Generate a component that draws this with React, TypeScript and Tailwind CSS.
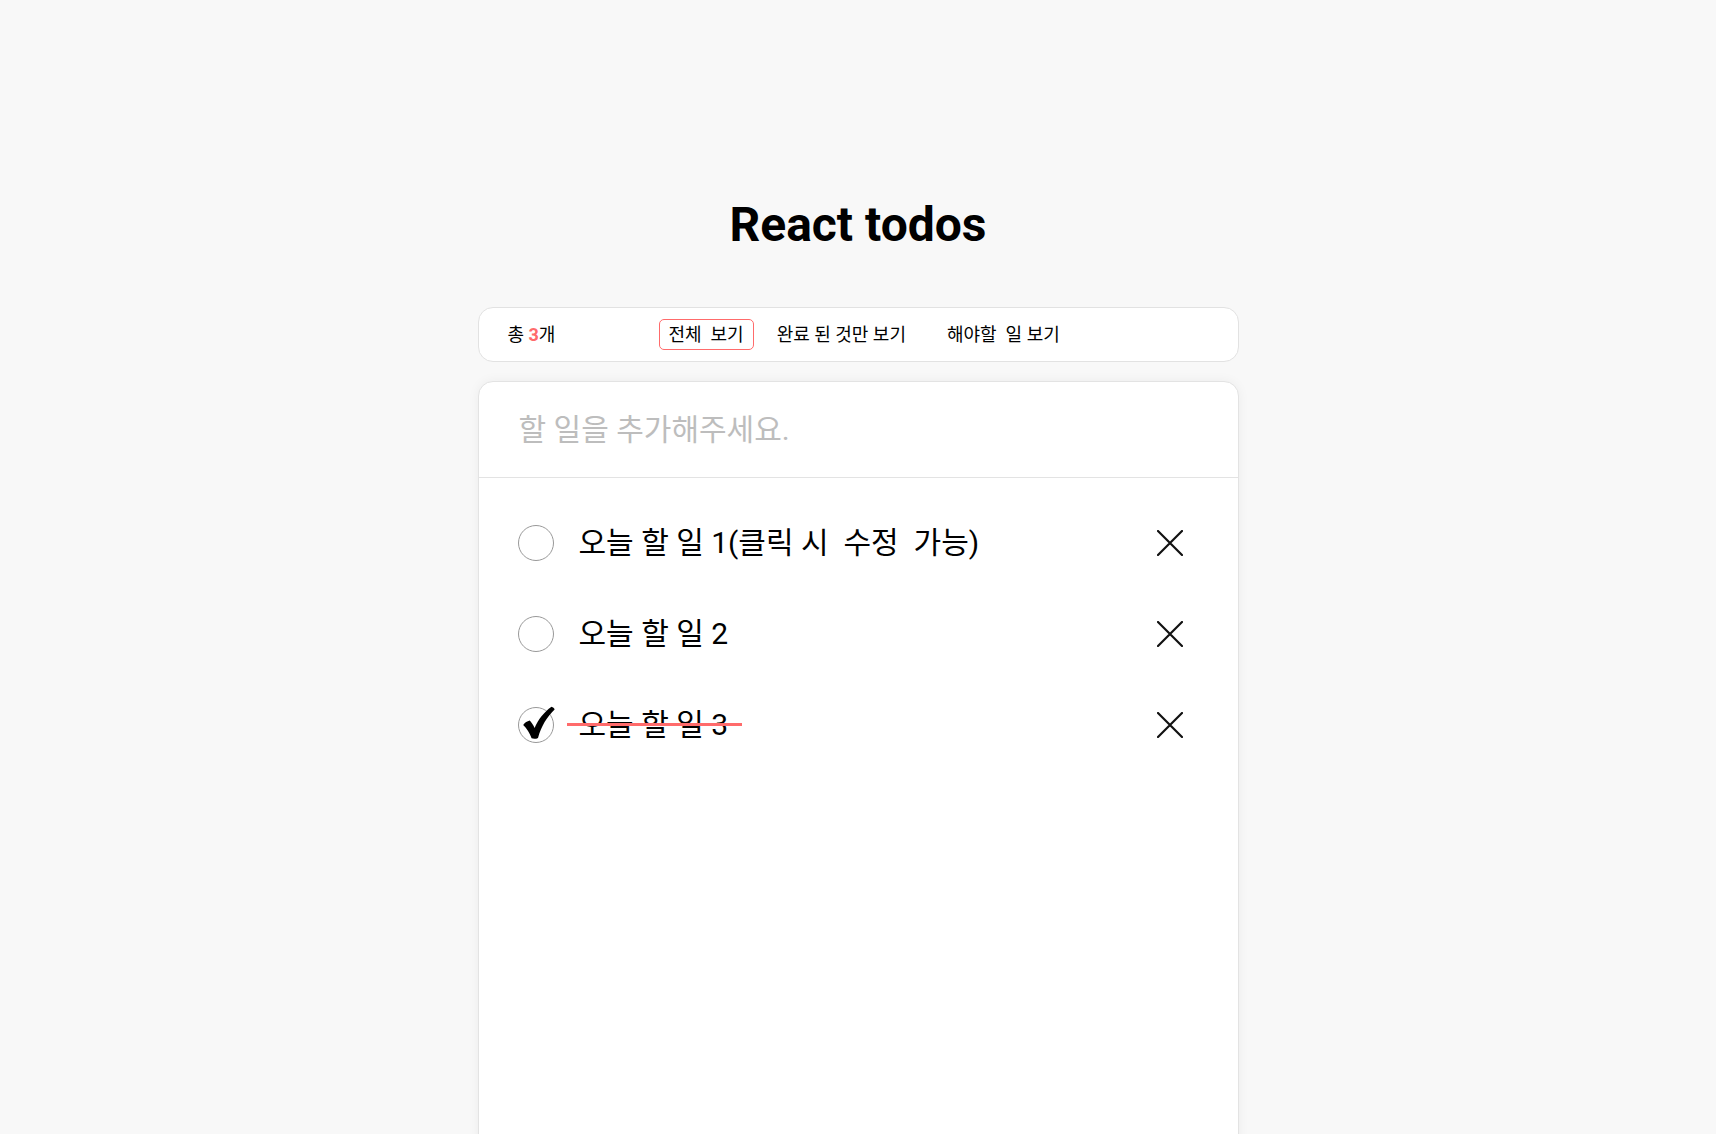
import React, { useState } from 'react';

type Todo = { id: number; text: string; done: boolean };
type Filter = 'all' | 'done' | 'todo';

const FILTERS: { id: Filter; label: string }[] = [
  { id: 'all', label: '전체\u00a0 보기' },
  { id: 'done', label: '완료 된 것만 보기' },
  { id: 'todo', label: '해야할\u00a0 일 보기' },
];

const INITIAL: Todo[] = [
  { id: 1, text: '오늘 할 일 1(클릭 시\u00a0 수정\u00a0 가능)', done: false },
  { id: 2, text: '오늘 할 일 2', done: false },
  { id: 3, text: '오늘 할 일 3', done: true },
];

const CheckMark = () => (
  <svg width="34" height="34" viewBox="0 0 34 34" className="absolute left-[3px] top-[-2px]">
    <path
      d="M1.2 19 C3 16.8 5 15.2 7.8 14.6 C9.8 16.8 11.2 19.2 12.6 22 C16 14 22 6 29.5 0.8 C31 1.2 32.3 2.3 32.6 3.5 C24.8 11 19.4 20 16 31.9 C14 33 11.5 33 9.6 32.3 C7.8 27 4.8 22.5 1.2 19 Z"
      fill="#000"
    />
  </svg>
);

const CloseIcon = () => (
  <svg width="26" height="26" viewBox="0 0 26 26">
    <path d="M1 1 L25 25 M25 1 L1 25" stroke="#111" strokeWidth="2.2" strokeLinecap="round" />
  </svg>
);

export default function App() {
  const [todos, setTodos] = useState<Todo[]>(INITIAL);
  const [filter, setFilter] = useState<Filter>('all');
  const [input, setInput] = useState('');

  const visible = todos.filter(t => (filter === 'all' ? true : filter === 'done' ? t.done : !t.done));

  const toggle = (id: number) => setTodos(prev => prev.map(t => (t.id === id ? { ...t, done: !t.done } : t)));
  const remove = (id: number) => setTodos(prev => prev.filter(t => t.id !== id));

  return (
    <div className="min-h-screen bg-[#f8f8f8] pt-[197px] font-[Roboto,'Noto_Sans_CJK_KR',sans-serif] text-black">
      <h1 className="text-center text-[48px] font-bold leading-[56px]">React todos</h1>

      <div className="mx-auto mt-[54px] flex h-[55px] w-[761px] items-center rounded-[15px] border border-[#e2e2e2] bg-white pl-[29px] text-[18px]">
        <div className="w-[151px]">
          총 <span className="font-bold text-[#ff6b6b]">{todos.length}</span>개
        </div>
        <div className="flex items-center gap-[13px]">
          {FILTERS.map(f => (
            <button
              key={f.id}
              type="button"
              onClick={() => setFilter(f.id)}
              className={`h-[31px] rounded-[5px] border px-[9px] leading-none ${
                filter === f.id ? 'border-[#ff6b6b]' : 'border-transparent'
              } ${f.id === 'todo' ? 'ml-[8px]' : ''}`}
            >
              {f.label}
            </button>
          ))}
        </div>
      </div>

      <div className="mx-auto mt-[19px] h-[800px] w-[761px] rounded-t-[15px] border border-[#e3e3e3] bg-white shadow-[0_0_12px_rgba(0,0,0,0.05)]">
        <div className="flex h-[96px] items-center border-b border-[#e3e3e3] px-[40px]">
          <input
            value={input}
            onChange={e => setInput(e.target.value)}
            onKeyDown={e => {
              if (e.key === 'Enter' && input.trim()) {
                setTodos(prev => [...prev, { id: Date.now(), text: input.trim(), done: false }]);
                setInput('');
              }
            }}
            placeholder="할 일을 추가해주세요."
            className="w-full bg-transparent text-[30px] outline-none placeholder:text-[#bdbdbd]"
          />
        </div>

        <ul className="pt-[19px]">
          {visible.map(t => (
            <li key={t.id} className="flex h-[91px] items-center pl-[39px] pr-[55px]">
              <button
                type="button"
                onClick={() => toggle(t.id)}
                className="relative h-[36px] w-[36px] shrink-0 rounded-full border border-[#999]"
              >
                {t.done && <CheckMark />}
              </button>
              <span className="relative ml-[25px] text-[30px] leading-[40px]">
                {t.text}
                {t.done && (
                  <span className="absolute left-[-12px] right-[-14px] top-[18px] h-[3px] bg-[#ff6b6b]" />
                )}
              </span>
              <button type="button" onClick={() => remove(t.id)} className="ml-auto flex">
                <CloseIcon />
              </button>
            </li>
          ))}
        </ul>
      </div>
    </div>
  );
}
